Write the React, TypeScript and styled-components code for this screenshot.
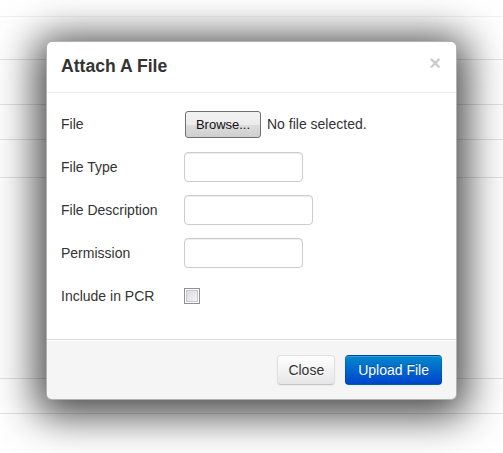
import React from 'react'
import styled, { createGlobalStyle } from 'styled-components'

const GlobalStyle = createGlobalStyle`
	html, body {
		margin: 0;
		padding: 0;
		background: #fff;
	}
	body {
		font-family: 'Liberation Sans', Arial, sans-serif;
		font-size: 14px;
		color: #333;
	}
`

const Page = styled.div`
	position: relative;
	width: 503px;
	height: 453px;
	overflow: hidden;
	background: #fff;
`

const Table = styled.div`
	display: flex;
	flex-direction: column;
	padding-top: 16px;
`

const TableRow = styled.div<{ $h: number; $faint?: boolean }>`
	height: ${p => p.$h}px;
	border-top: 1px solid ${p => (p.$faint ? '#f2f2f2' : '#e2e2e2')};
	box-sizing: border-box;
`

const Modal = styled.div`
	position: absolute;
	left: 46px;
	top: 41px;
	width: 411px;
	box-sizing: border-box;
	background: #fff;
	border: 1px solid rgba(0, 0, 0, 0.3);
	border-radius: 6px;
	box-shadow: 0 6px 40px 10px rgba(0, 0, 0, 0.72);
	display: flex;
	flex-direction: column;
`

const Header = styled.div`
	position: relative;
	height: 51px;
	box-sizing: border-box;
	padding: 0 14px;
	display: flex;
	align-items: center;
	border-bottom: 1px solid #eee;
`

const Title = styled.h3`
	margin: 0 0 2px;
	font-size: 17.6px;
	font-weight: bold;
	color: #333;
`

const CloseX = styled.span`
	position: absolute;
	right: 15px;
	top: 11px;
	font-size: 20px;
	font-weight: bold;
	line-height: 20px;
	color: #000;
	opacity: 0.2;
`

const Body = styled.div`
	padding: 16px 14px 15px;
	display: flex;
	flex-direction: column;
`

const FormRow = styled.div`
	display: flex;
	align-items: center;
	height: 30px;
	margin-bottom: 13px;
`

const Label = styled.label`
	width: 123px;
	flex-shrink: 0;
	font-size: 14px;
	color: #333;
`

const BrowseButton = styled.button`
	width: 76px;
	height: 27px;
	margin-left: 1px;
	padding: 0;
	font-family: 'Liberation Sans', Arial, sans-serif;
	font-size: 13px;
	color: #111;
	border: 1px solid #707070;
	border-radius: 3px;
	background: linear-gradient(#f2f2f2 0%, #ebebeb 50%, #dddddd 51%, #cfcfcf 100%);
`

const NoFile = styled.span`
	margin-left: 6px;
	font-size: 14px;
	color: #333;
`

const TextInput = styled.input<{ $w: number }>`
	width: ${p => p.$w}px;
	height: 30px;
	box-sizing: border-box;
	border: 1px solid #ccc;
	border-radius: 4px;
	box-shadow: inset 0 1px 1px rgba(0, 0, 0, 0.075);
	background: #fff;
	padding: 4px 6px;
	font-size: 14px;
	outline: none;
`

const CheckBox = styled.span`
	width: 16px;
	height: 16px;
	box-sizing: border-box;
	margin-top: -1px;
	border: 1px solid #8f8f8f;
	background: #fff;
	padding: 1px;
	&::after {
		content: '';
		display: block;
		width: 100%;
		height: 100%;
		background: linear-gradient(135deg, #dcdde3 0%, #f3f3f5 100%);
		border: 1px solid #c4c6cc;
		box-sizing: border-box;
	}
`

const Footer = styled.div`
	display: flex;
	justify-content: flex-end;
	gap: 10px;
	padding: 15px 14px 14px;
	background: #f5f5f5;
	border-top: 1px solid #ddd;
	border-radius: 0 0 6px 6px;
	box-shadow: inset 0 1px 0 #fff;
`

const Button = styled.button<{ $primary?: boolean }>`
	height: 30px;
	padding: 0 ${p => (p.$primary ? 12 : 10)}px;
	font-family: 'Liberation Sans', Arial, sans-serif;
	font-size: 14px;
	border-radius: 4px;
	cursor: pointer;
	color: ${p => (p.$primary ? '#fff' : '#333')};
	text-shadow: ${p => (p.$primary ? '0 -1px 0 rgba(0,0,0,0.25)' : '0 1px 1px rgba(255,255,255,0.75)')};
	background: ${p => (p.$primary ? 'linear-gradient(#0088cc, #0044cc)' : 'linear-gradient(#ffffff, #e6e6e6)')};
	border: 1px solid ${p => (p.$primary ? 'rgba(0,0,0,0.1)' : '#e0e0e0')};
	border-bottom-color: ${p => (p.$primary ? 'rgba(0,0,0,0.25)' : '#c4c4c4')};
	box-shadow: inset 0 1px 0 rgba(255, 255, 255, 0.2), 0 1px 2px rgba(0, 0, 0, 0.05);
`

const rows = [43, 45, 35, 38, 201, 35, 40]

export default function App() {
	return (
		<Page>
			<GlobalStyle />
			<Table>
				{rows.map((h, i) => (
					<TableRow key={i} $h={h} $faint={i === 0} />
				))}
			</Table>
			<Modal>
				<Header>
					<Title>Attach A File</Title>
					<CloseX>×</CloseX>
				</Header>
				<Body>
					<FormRow>
						<Label>File</Label>
						<BrowseButton>Browse...</BrowseButton>
						<NoFile>No file selected.</NoFile>
					</FormRow>
					<FormRow>
						<Label>File Type</Label>
						<TextInput $w={119} />
					</FormRow>
					<FormRow>
						<Label>File Description</Label>
						<TextInput $w={129} />
					</FormRow>
					<FormRow>
						<Label>Permission</Label>
						<TextInput $w={119} />
					</FormRow>
					<FormRow>
						<Label>Include in PCR</Label>
						<CheckBox />
					</FormRow>
				</Body>
				<Footer>
					<Button>Close</Button>
					<Button $primary>Upload File</Button>
				</Footer>
			</Modal>
		</Page>
	)
}
